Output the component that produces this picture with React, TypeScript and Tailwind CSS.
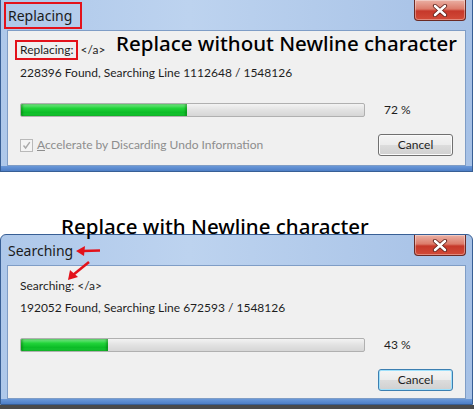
import type { ReactNode } from 'react'

const FONT = { fontFamily: 'Lato, "Noto Sans", Arial, sans-serif' }
const HEAD = { fontFamily: '"Noto Sans", "Open Sans", Arial, sans-serif' }

function CloseButton() {
  return (
    <div className="mr-[6px] flex h-[21px] w-[52px] items-center justify-center rounded-b-[4px] border border-t-0 border-[#6b2a24] bg-[linear-gradient(180deg,#eab0a4_0%,#dc7b6a_45%,#c6382a_55%,#d24b38_100%)] shadow-[inset_0_0_0_1px_rgba(255,255,255,0.35)]">
      <svg width="16" height="13" viewBox="0 0 16 13">
        <path d="M3 2 L13 11 M13 2 L3 11" stroke="#5a1d17" strokeWidth="4.2" strokeLinecap="round" />
        <path d="M3 2 L13 11 M13 2 L3 11" stroke="#ffffff" strokeWidth="2.6" strokeLinecap="round" />
      </svg>
    </div>
  )
}

function ProgressBar({ fill, pct }: { fill: number; pct: string }) {
  return (
    <div className="flex items-center">
      <div className="relative h-[14px] w-[345px] overflow-hidden rounded-[2px] border border-[#b0b0b0] bg-[linear-gradient(180deg,#f3f3f3_0%,#e2e2e2_50%,#d6d6d6_100%)]">
        <div
          className="h-full bg-[linear-gradient(180deg,#7ee88c_0%,#22d43a_35%,#0cbc27_70%,#19c834_100%)] shadow-[inset_-2px_0_2px_rgba(0,90,0,0.35),inset_2px_0_2px_rgba(0,90,0,0.35)]"
          style={{ width: `${fill}px` }}
        />
      </div>
      <span className="ml-[19px] text-[12px] text-[#1e1e1e]">{pct}</span>
    </div>
  )
}

function CancelButton({ focused }: { focused?: boolean }) {
  return (
    <button
      className={
        'flex h-[22px] w-[75px] items-center justify-center rounded-[3px] border text-[12px] text-[#1e1e1e] bg-[linear-gradient(180deg,#f5f5f5_0%,#ececec_48%,#dcdcdc_52%,#d0d0d0_100%)] ' +
        (focused
          ? 'border-[#3c7fb1] shadow-[inset_0_0_0_1px_#9fe0fb]'
          : 'border-[#707070] shadow-[inset_0_0_0_1px_#fbfbfb]')
      }
    >
      Cancel
    </button>
  )
}

function Window({
  title,
  rounded,
  children,
}: {
  title: ReactNode
  rounded?: boolean
  children: ReactNode
}) {
  return (
    <div
      className={
        'w-[473px] border border-[#385f95] bg-[linear-gradient(90deg,#aec8ea_0%,#bdd3ef_40%,#a6c1e6_100%)] ' +
        (rounded ? 'rounded-t-[6px]' : 'border-t-0')
      }
    >
      <div className="flex h-[30px] items-start justify-between">
        <div className="flex h-full items-center pl-[7px] text-[14px] text-[#1b1b1b]" style={HEAD}>
          {title}
        </div>
        <CloseButton />
      </div>
      <div className="mx-[6px] border border-[#7f9dc6] bg-[#f0f0f0]">{children}</div>
      <div className="h-[5px] bg-[linear-gradient(180deg,#6a98d8,#4d7ec6)]" />
    </div>
  )
}

export default function App() {
  return (
    <div className="relative h-[409px] w-[474px] overflow-hidden bg-white" style={FONT}>
      <Window
        title={
          <span className="-ml-[4px] flex h-[27px] items-center border-2 border-[#e3121b] pl-[2px] pr-[8px]">
            Replacing
          </span>
        }
      >
        <div className="h-[134px] px-[12px] pt-[11px] text-[12px] text-[#1e1e1e]">
          <div className="flex h-[16px] items-center">
            <span className="-ml-[5px] mr-[3px] flex h-[20px] items-center border-2 border-[#e3121b] pl-[3px] pr-[2px]">
              Replacing:
            </span>
            <span>&lt;/a&gt;</span>
          </div>
          <div className="mt-[7px] flex h-[16px] items-center">228396 Found, Searching Line 1112648 / 1548126</div>
          <div className="mt-[20px]">
            <ProgressBar fill={166} pct="72 %" />
          </div>
          <div className="mt-[15px] flex items-start justify-between">
            <div className="mt-[2px] flex items-center">
              <span className="flex h-[13px] w-[13px] items-center justify-center border border-[#b9b9b9] bg-[#f4f4f4]">
                <svg width="9" height="9" viewBox="0 0 9 9">
                  <path d="M1.5 4.5 L3.6 7 L7.8 1.2" fill="none" stroke="#a9a9a9" strokeWidth="1.4" />
                </svg>
              </span>
              <span className="ml-[4px] text-[#8d8d8d]">
                <span className="underline">A</span>ccelerate by Discarding Undo Information
              </span>
            </div>
            <CancelButton />
          </div>
        </div>
      </Window>

      <div className="h-[62px] pl-[61px] pt-[44px]">
        <div className="text-[20.5px] font-medium leading-none text-black" style={HEAD}>
          Replace with Newline character
        </div>
      </div>

      <Window title="Searching" rounded>
        <div className="h-[132px] px-[12px] pt-[12px] text-[12px] text-[#1e1e1e]">
          <div className="flex h-[16px] items-center">Searching: &lt;/a&gt;</div>
          <div className="mt-[6px] flex h-[16px] items-center">192052 Found, Searching Line 672593 / 1548126</div>
          <div className="mt-[20px]">
            <ProgressBar fill={87} pct="43 %" />
          </div>
          <div className="mt-[15px] flex justify-end">
            <CancelButton focused />
          </div>
        </div>
      </Window>
      <div className="h-[10px] bg-[#4a4a4a]" />

      {/* annotation heading over the first dialog */}
      <div
        className="absolute left-[116px] top-[33px] text-[20.5px] font-medium leading-none text-black"
        style={HEAD}
      >
        Replace without Newline character
      </div>

      {/* red arrows */}
      <svg className="absolute left-0 top-0" width="474" height="409" viewBox="0 0 474 409">
        <path d="M100 250.5 L82 251" stroke="#e3121b" strokeWidth="2.5" />
        <path d="M76 251 L85 246 L84 256 Z" fill="#e3121b" />
        <path d="M89 262 L73 275" stroke="#e3121b" strokeWidth="2.5" />
        <path d="M68 280 L70 270 L78 277 Z" fill="#e3121b" />
      </svg>
    </div>
  )
}
